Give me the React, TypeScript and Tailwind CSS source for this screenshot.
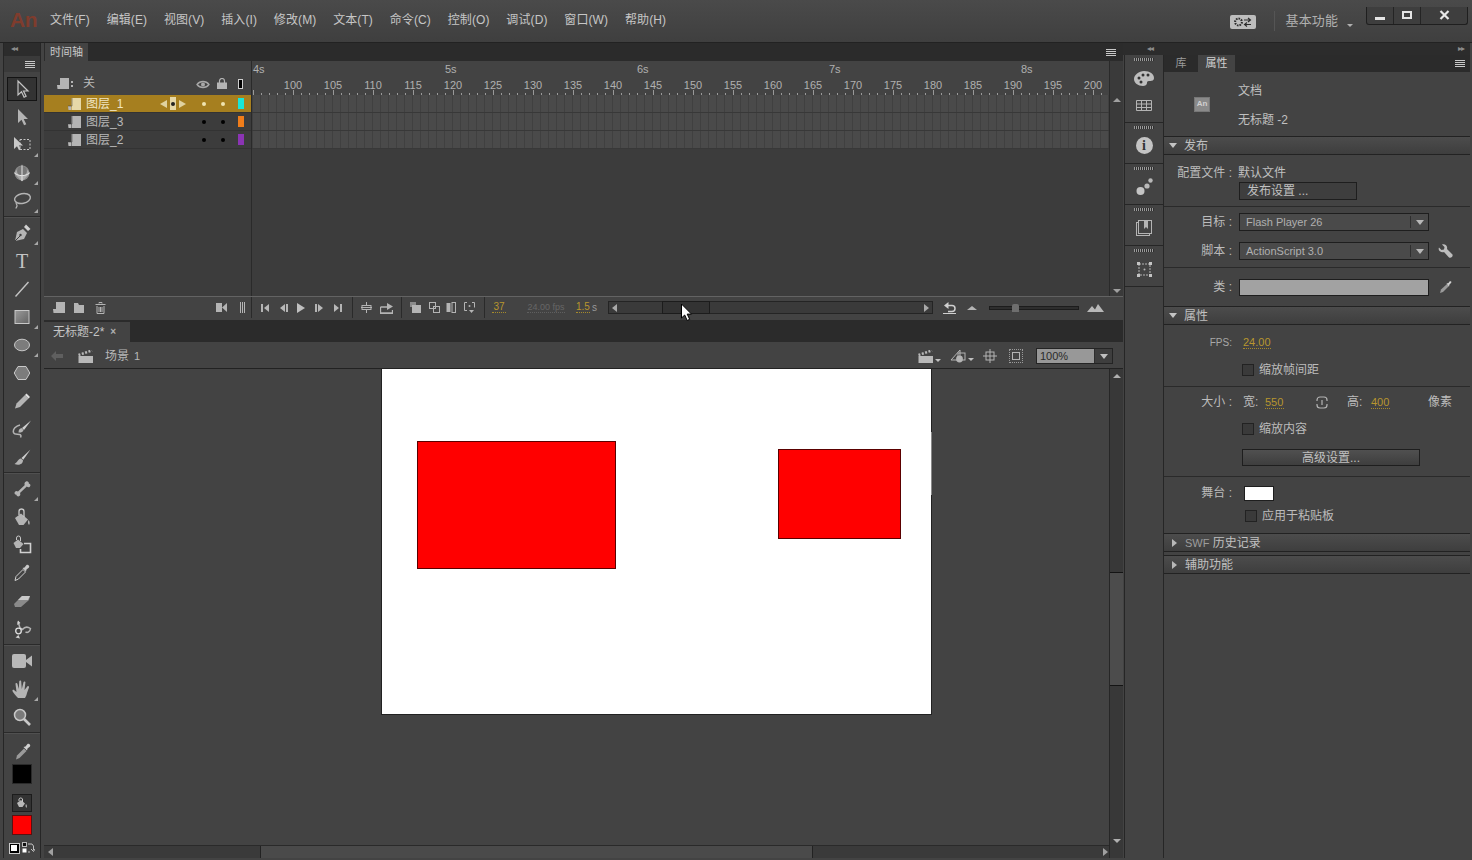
import React from "react";

// Adobe Animate: main window in the dark theme

const G = "#b4b4b4";

function Svg({ s = 20, w, h, children, className }: { s?: number; w?: number; h?: number; children: React.ReactNode; className?: string }) {
  const vw = w ?? s;
  const vh = h ?? s;
  return (
    <svg width={vw} height={vh} viewBox={`0 0 ${vw} ${vh}`} className={className} fill="none">
      {children}
    </svg>
  );
}

// Tool icons, drawn on a 20 x 20 box
const toolIcons: Record<string, React.ReactNode> = {
  select: <path d="M6 2v14l3.500-3.200 2.600 5.400 2-1-2.600-5.200H16z" stroke="#c4c4c4" strokeWidth="1.200" fill="#3a3a3a" />,
  sub: <path d="M6 2v14l3.500-3.200 2.600 5.400 2.200-1-2.600-5.200H16z" fill={G} />,
  free: (
    <>
      <rect x="8" y="4.500" width="10" height="10" stroke="#c4c4c4" strokeDasharray="2 1.500" />
      <path d="M2 2v12l3-2.800 2 4 1.800-.9-2-3.800H11z" fill="#c8c8c8" />
    </>
  ),
  d3: (
    <>
      <circle cx="10" cy="10" r="7.500" fill="#8a8a8a" />
      <path d="M10 1.500l8 8.500-8 8.500L2 10z" fill="#c8c8c8" opacity=".55" />
      <circle cx="10" cy="8" r="5" fill="#777777" />
      <path d="M2.500 10c4 3.500 11 3.500 15 0M10 3v15" stroke="#e4e4e4" strokeWidth="1" />
    </>
  ),
  lasso: (
    <>
      <ellipse cx="10.500" cy="7.500" rx="8" ry="4.800" stroke={G} strokeWidth="1.400" transform="rotate(-12 10.500 7.500)" />
      <path d="M4.500 11c-1.500 2 1 2.500.5 4-.3 1-1 1.600-1 2.500" stroke={G} strokeWidth="1.300" />
    </>
  ),
  pen: (
    <>
      <path d="M3 18l2-9 6-3 4 4-3 6z" fill={G} />
      <path d="M12 4l2-2.500 4.500 4.500-2.500 2z" fill="#d0d0d0" />
      <path d="M3 18l5-5" stroke="#404040" />
      <circle cx="8.500" cy="12" r="1.200" fill="#404040" />
    </>
  ),
  line: <path d="M3.500 17.500L16.500 3" stroke="#c4c4c4" strokeWidth="1.400" />,
  rect: (
    <>
      <defs>
        <linearGradient id="rg" x1="0" y1="0" x2="1" y2="1">
          <stop offset="0" stopColor="#9a9a9a" />
          <stop offset="1" stopColor="#636363" />
        </linearGradient>
      </defs>
      <rect x="3" y="3.500" width="14" height="13" fill="url(#rg)" stroke="#c8c8c8" />
    </>
  ),
  oval: <ellipse cx="10" cy="10" rx="7.500" ry="5.800" fill="#7c7c7c" stroke="#c8c8c8" />,
  hex: <path d="M6 3.500h8l3.800 6.500-3.800 6.500H6L2.200 10z" fill="#7c7c7c" stroke="#c8c8c8" />,
  pencil: (
    <>
      <path d="M3 17.500l1.500-5L13 4l3.500 3.500-8.500 8.500z" fill={G} />
      <path d="M13 4l1.500-1.500 3.500 3.500L16.500 7.500z" fill="#e0e0e0" />
    </>
  ),
  brushwave: (
    <>
      <path d="M19 1.500l-9 7.500 2 2z" fill="#d0d0d0" />
      <path d="M9.500 9c-2.500.5-3 2.500-3 4.500 2.500.2 4.500-.5 5-2.500z" fill={G} />
      <path d="M8 6C4 7 .5 10 1.500 13.500c1 2.500 3.500 1.500 6 2 1.500.3 1.800 1.300 1 3" stroke={G} strokeWidth="1.500" />
    </>
  ),
  brush: (
    <>
      <path d="M18.500 2.500L9.500 11l1.800 1.800z" fill="#d0d0d0" />
      <path d="M9 11.500c-3 .3-3.500 4-6.500 5.500 4 1.500 8.500.5 8.500-3.800z" fill={G} />
    </>
  ),
  bone: <path d="M14 2.500c1.800-.6 3 .5 2.800 2 1.600.2 2.300 2 1 3.200-1 .9-2.300.5-3-.2L8 14c.5 1 .5 2-.3 2.800-1.300 1.200-3 .5-3.300-1-1.600 0-2.600-1.800-1.400-3.100.9-.9 2.100-.8 3-.1L12.800 6c-.6-1-.5-2.800 1.200-3.500z" fill={G} />,
  ink: (
    <>
      <path d="M3 11l6-4.500 7 6-4.500 5.500H7z" fill={G} />
      <path d="M7 8V4.500a2.500 2.500 0 0 1 5 0V10" stroke="#c8c8c8" strokeWidth="1.300" />
      <path d="M16.500 13c1.500 1.500 1.500 4 .5 5-1-1-1.500-3-.5-5z" fill={G} />
    </>
  ),
  bucket: (
    <>
      <path d="M1.500 8l4.500-3.500 5.500 4.500-3.500 4H4z" fill={G} />
      <path d="M4.500 5V3a2 2 0 0 1 4 0v3" stroke="#c8c8c8" />
      <path d="M12 8.500h6.500v9H8.500V14" stroke="#d0d0d0" strokeWidth="1.600" />
    </>
  ),
  dropper: (
    <>
      <path d="M3 17.500l1-4L11 6.500l2.500 2.500-7 7z" stroke="#d0d0d0" />
      <path d="M10.500 5l2-.5 2-2.500c1.500-1 3.500 1 2.500 2.500l-2.500 2-.5 2z" fill="#c8c8c8" />
    </>
  ),
  eraser: (
    <>
      <path d="M2 13l8-8h8l-1 4-8 7H3z" fill="#8a8a8a" />
      <path d="M10 5h8l-2 4H6z" fill="#c8c8c8" />
    </>
  ),
  width: (
    <>
      <path d="M6 2.500l2 6.500 2.500 1.500c2-2.500 5-3 8-1-.5 3.500-3 4.500-5 3.500" stroke={G} strokeWidth="1.500" />
      <path d="M6 1.500l2.500 2.500L5 6zM3.500 18.500l3-2.500L8 19.500z" fill="#d0d0d0" />
      <circle cx="6.500" cy="12" r="2.800" stroke="#e0e0e0" strokeWidth="1.300" />
    </>
  ),
  camera: (
    <>
      <rect x="0" y="3" width="14" height="14" rx="2" fill="#b8b8b8" />
      <path d="M14 9l6-4.500v11L14 11z" fill="#b8b8b8" />
    </>
  ),
  hand: <path d="M6 19c-1.500-1.500-5-5.500-5.500-7-.3-1.200 1-1.700 1.800-.8L4.500 13 3.500 5c-.1-1.300 1.600-1.500 1.900-.2L6.800 10 7.200 2.500c.1-1.300 2-1.300 2 0L9.800 10 11.500 3.300c.3-1.200 2-1 1.900.3L12.500 11l2.800-3.500c.8-1 2.300 0 1.600 1.200L15 14c-.5 2-1 3.500-2 5z" fill={G} />,
  zoom: (
    <>
      <circle cx="8" cy="8" r="5.500" fill="#7a7a7a" stroke="#c8c8c8" strokeWidth="1.500" />
      <path d="M12 12l6 6" stroke="#c8c8c8" strokeWidth="2.600" />
    </>
  ),
  dropperSm: (
    <>
      <path d="M3 17.500l1-4L11 6.500l2.500 2.500-7 7z" fill="#9a9a9a" />
      <path d="M10.500 5l2-.5 2-2.500c1.500-1 3.500 1 2.500 2.500l-2.500 2-.5 2z" fill="#d0d0d0" />
    </>
  ),
};

function Tool({ name, corner, active }: { name?: string; corner?: boolean; active?: boolean }) {
  return (
    <div className="relative mx-auto flex h-[28px] w-[32px] items-center justify-center">
      {active && <div className="absolute inset-x-[1px] inset-y-[2px] border border-[#141414] bg-[#333333]" />}
      {name ? (
        <Svg s={20} className="relative">
          {toolIcons[name]}
        </Svg>
      ) : (
        <span className="relative font-['Liberation_Serif',serif] text-[20px] leading-none text-[#c4c4c4]">T</span>
      )}
      {corner && <div className="absolute bottom-[2px] right-[0px] h-0 w-0 border-b-[4px] border-l-[4px] border-b-[#a8a8a8] border-l-transparent" />}
    </div>
  );
}

function Sep() {
  return <div className="my-[1px] h-[2px] border-b border-t border-b-[#505050] border-t-[#2a2a2a]" />;
}

function MenuLines() {
  return (
    <div className="flex w-[10px] flex-col gap-[1px]">
      <div className="h-[1px] bg-[#c8c8c8]" />
      <div className="h-[1px] bg-[#c8c8c8]" />
      <div className="h-[1px] bg-[#c8c8c8]" />
      <div className="h-[1px] bg-[#c8c8c8]" />
    </div>
  );
}

function TitleBar() {
  const menus = ["文件(F)", "编辑(E)", "视图(V)", "插入(I)", "修改(M)", "文本(T)", "命令(C)", "控制(O)", "调试(D)", "窗口(W)", "帮助(H)"];
  return (
    <div className="relative flex h-[42px] shrink-0 items-center bg-gradient-to-b from-[#4a4a4a] to-[#3f3f3f] text-[12px] tracking-[0.1px] text-[#c6c6c6]">
      <div className="ml-[10px] w-[40px] pb-[3px] font-['Liberation_Sans',sans-serif] text-[21px] font-bold leading-none tracking-[-0.5px] text-[#7f3c2d]">An</div>
      <div className="flex gap-[16.8px] pb-[3px]">
        {menus.map((m) => (
          <span key={m}>{m}</span>
        ))}
      </div>
      <div className="ml-auto flex items-center self-start">
        <div className="mt-[13px] flex h-[14px] w-[26px] items-center justify-center rounded-[2px] bg-[#bdbdbd]">
          <Svg w={20} h={10}>
            <circle cx="5.500" cy="5" r="3.400" stroke="#2c2c2c" strokeWidth="2" strokeDasharray="1.600 1" />
            <path d="M11 3h6M15 1l2.500 2-2.500 2M18 7.500h-6M14 5.500l-2.500 2 2.500 2" stroke="#2c2c2c" strokeWidth="1.100" />
          </Svg>
        </div>
        <div className="ml-[18px] mt-[11px] h-[20px] w-[1px] bg-[#555555]" />
        <span className="ml-[11px] mt-[10px] text-[13px] text-[#b0b0b0]">基本功能</span>
        <div className="ml-[9px] mt-[19px] h-0 w-0 border-l-[3px] border-r-[3px] border-t-[3px] border-l-transparent border-r-transparent border-t-[#b0b0b0]" />
        <div className="ml-[13px] flex h-[18px] overflow-hidden rounded-b-[3px] border border-t-0 border-[#1f1f1f] bg-[#3e3e3e]">
          <div className="flex w-[27px] items-end justify-center border-r border-[#242424] pb-[4px]">
            <div className="h-[3px] w-[10px] bg-[#e4e4e4]" />
          </div>
          <div className="flex w-[27px] items-center justify-center border-r border-[#242424]">
            <div className="h-[8px] w-[10px] border-2 border-[#e4e4e4]" />
          </div>
          <div className="flex w-[46px] items-center justify-center">
            <Svg w={11} h={10}>
              <path d="M1.500 1l8 8M9.500 1l-8 8" stroke="#e8e8e8" strokeWidth="2.200" />
            </Svg>
          </div>
        </div>
        <div className="w-[4px]" />
      </div>
    </div>
  );
}

function ToolBar() {
  return (
    <div className="ml-[3px] flex w-[38px] shrink-0 flex-col border-x border-[#262626]">
      <div className="flex h-[13px] items-center bg-[#2c2c2c] pl-[7px] text-[8px] leading-none tracking-[-1px] text-[#8c8c8c]">
        <span className="pb-[2px]">◂◂</span>
      </div>
      <div className="flex h-[16px] items-center justify-end bg-[#3a3a3a] pr-[5px]">
        <MenuLines />
      </div>
      <div className="mt-[3px] flex flex-col">
        <Tool name="select" active />
        <Tool name="sub" />
        <Tool name="free" corner />
        <Tool name="d3" corner />
        <Tool name="lasso" corner />
        <div className="h-[4px]"><Sep /></div>
        <Tool name="pen" corner />
        <Tool />
        <Tool name="line" />
        <Tool name="rect" corner />
        <Tool name="oval" corner />
        <Tool name="hex" />
        <Tool name="pencil" />
        <Tool name="brushwave" />
        <Tool name="brush" />
        <div className="h-[4px]"><Sep /></div>
        <Tool name="bone" corner />
        <Tool name="ink" />
        <Tool name="bucket" />
        <Tool name="dropper" />
        <Tool name="eraser" />
        <Tool name="width" />
        <div className="h-[4px]"><Sep /></div>
        <Tool name="camera" />
        <Tool name="hand" corner />
        <Tool name="zoom" />
        <div className="h-[6px]"><Sep /></div>
        <div className="flex h-[27px] items-center justify-center">
          <Svg s={18}>{toolIcons.dropperSm}</Svg>
        </div>
        <div className="mx-auto h-[20px] w-[20px] border border-[#2a2a2a] bg-black" />
        <div className="mx-auto mt-[10px] flex h-[18px] w-[20px] items-center justify-center border border-[#1c1c1c] bg-[#333333]">
          <Svg s={14}>
            <path d="M2 7l4-3 4 3.500-2.500 3.500H4z" fill="#b8b8b8" />
            <path d="M4 5V3a2 2 0 0 1 3.500 0v3" stroke="#c8c8c8" />
            <path d="M11 8c1 1 1.200 3 .3 4-.8-1-1-2.800-.3-4z" fill="#b8b8b8" />
          </Svg>
        </div>
        <div className="mx-auto mt-[3px] h-[20px] w-[20px] border border-[#5a1010] bg-[#ff0000]" />
        <div className="mt-[7px] flex items-center justify-center gap-[2px]">
          <div className="relative h-[11px] w-[11px] border border-[#cccccc] bg-black">
            <div className="absolute left-[1px] top-[1px] h-[6px] w-[6px] bg-white" />
          </div>
          <Svg w={13} h={12}>
            <rect x=".5" y=".5" width="4" height="4" fill="#111111" stroke="#bbbbbb" />
            <rect x=".5" y="6.500" width="4" height="4" fill="#ffffff" />
            <path d="M6 2h4l1.500 2v4M9 7l2.500 2.500L13 7M8 10H6" stroke="#c0c0c0" />
          </Svg>
        </div>
      </div>
    </div>
  );
}

function Gl({ w, children, className = "" }: { w: number; children?: React.ReactNode; className?: string }) {
  return (
    <div className={`flex shrink-0 items-center justify-center ${className}`} style={{ width: w }}>
      {children}
    </div>
  );
}

function LayerIcon({ light }: { light?: boolean }) {
  return (
    <Svg w={13} h={12}>
      <path d="M3.500 0H13v12H3.500z" fill={light ? "#e6d8a8" : "#b4b4b4"} />
      <path d="M0 8h3v4H.5z" fill="#b8b8b8" />
      <path d="M0 8h4V0" stroke="#333333" strokeWidth=".8" opacity=".6" />
    </Svg>
  );
}

function Dot({ light }: { light?: boolean }) {
  return <div className={`h-[4px] w-[4px] rounded-full ${light ? "bg-[#f0e4b0]" : "bg-black"}`} />;
}

function LayerRow({ name, color, active }: { name: string; color: string; active?: boolean }) {
  return (
    <div className={`flex h-[18px] items-center border-b border-[#333333] ${active ? "bg-[#a67f1f] text-[#f0e6c4]" : "text-[#b8b8b8]"}`}>
      <div className="ml-[24px]">
        <LayerIcon light={active} />
      </div>
      <span className="ml-[5px] w-[66px] text-[12px] leading-none">{name}</span>
      {active ? (
        <div className="flex w-[42px] items-center justify-center gap-[3px]">
          <div className="h-0 w-0 border-y-[4px] border-r-[7px] border-y-transparent border-r-[#e0d2a0]" />
          <div className="flex h-[13px] w-[6px] items-center justify-center bg-[#e6d8a8]">
            <div className="h-[4px] w-[4px] rounded-full bg-[#222222]" />
          </div>
          <div className="h-0 w-0 border-y-[4px] border-l-[7px] border-y-transparent border-l-[#e0d2a0]" />
        </div>
      ) : (
        <div className="w-[42px]" />
      )}
      <Gl w={19}>
        <Dot light={active} />
      </Gl>
      <Gl w={19}>
        <Dot light={active} />
      </Gl>
      <Gl w={18}>
        <div className="h-[11px] w-[6px]" style={{ backgroundColor: color }} />
      </Gl>
    </div>
  );
}

function Ruler() {
  const secs = ["4s", "5s", "6s", "7s", "8s"];
  const nums = Array.from({ length: 21 }, (_, i) => 100 + i * 5);
  return (
    <div className="relative h-[34px] flex-1 overflow-hidden text-[11px] leading-none text-[#b0b0b0]">
      <div className="flex pl-[1px] pt-[3px]">
        {secs.map((s) => (
          <span key={s} className="w-[192px] shrink-0">
            {s}
          </span>
        ))}
      </div>
      <div className="mt-[5px] flex pl-[21px]">
        {nums.map((n) => (
          <span key={n} className="w-[40px] shrink-0 text-center">
            {n}
          </span>
        ))}
      </div>
      <div className="absolute bottom-0 left-[1px] right-0 h-[2px] bg-[repeating-linear-gradient(90deg,#9a9a9a_0,#9a9a9a_1px,transparent_1px,transparent_8px)]" />
      <div className="absolute bottom-0 left-[1px] right-0 h-[5px] bg-[repeating-linear-gradient(90deg,#9a9a9a_0,#9a9a9a_1px,transparent_1px,transparent_40px)]" />
    </div>
  );
}

function FrameRow() {
  return <div className="h-[18px] border-b border-[#383838] bg-[#4a4a4a] bg-[repeating-linear-gradient(90deg,#404040_0,#404040_1px,transparent_1px,transparent_8px)]" />;
}

function Timeline() {
  return (
    <div className="flex h-[279px] shrink-0 flex-col border-b-2 border-[#2b2b2b] bg-[#3c3c3c]">
      <div className="flex h-[18px] shrink-0 items-stretch bg-[#2b2b2b] pl-[1px]">
        <div className="flex w-[43px] items-center justify-center bg-[#434343] text-[11px] text-[#c8c8c8]">时间轴</div>
        <div className="ml-auto flex items-center pr-[7px]">
          <MenuLines />
        </div>
      </div>
      <div className="flex min-h-0 flex-1">
        <div className="flex min-w-0 flex-1 flex-col">
          <div className="flex min-h-0 flex-1">
            <div className="flex w-[208px] shrink-0 flex-col border-r border-[#2a2a2a]">
              <div className="flex h-[34px] items-end bg-[#434343] pb-[6px]">
                <div className="ml-[13px] flex items-center gap-[2px]">
                  <Svg w={12} h={11}>
                    <path d="M3 0h9v11H3z" fill="#b4b4b4" />
                    <path d="M0 7h3v4H.5z" fill="#b8b8b8" />
                  </Svg>
                  <div className="flex flex-col gap-[2px]">
                    <div className="h-[2px] w-[2px] bg-[#b4b4b4]" />
                    <div className="h-[2px] w-[2px] bg-[#b4b4b4]" />
                  </div>
                </div>
                <span className="ml-[10px] w-[110px] text-[12px] leading-none text-[#b8b8b8]">关</span>
                <Gl w={19}>
                  <Svg w={14} h={9}>
                    <path d="M1 4.500C4 .5 10 .5 13 4.500 10 8.500 4 8.500 1 4.500z" stroke="#a8a8a8" strokeWidth="1.300" />
                    <circle cx="7" cy="4.500" r="2" fill="#a8a8a8" />
                  </Svg>
                </Gl>
                <Gl w={19}>
                  <Svg w={10} h={11}>
                    <rect y="4.500" width="10" height="6.500" fill="#b4b4b4" />
                    <path d="M2.500 5V3a2.500 2.500 0 0 1 5 0v2" stroke="#b4b4b4" strokeWidth="1.200" />
                  </Svg>
                </Gl>
                <Gl w={18}>
                  <div className="h-[10px] w-[5px] border border-[#cfcfcf] bg-black" />
                </Gl>
              </div>
              <LayerRow name="图层_1" color="#19e6d8" active />
              <LayerRow name="图层_3" color="#f07d1a" />
              <LayerRow name="图层_2" color="#8b34b4" />
            </div>
            <div className="flex min-w-0 flex-1 flex-col overflow-hidden">
              <div className="flex bg-[#434343]">
                <Ruler />
              </div>
              <FrameRow />
              <FrameRow />
              <FrameRow />
            </div>
          </div>
        </div>
        <div className="flex w-[14px] shrink-0 flex-col items-center justify-between border-l border-[#2a2a2a] bg-[#3a3a3a] py-[37px] pb-[3px]">
          <div className="h-0 w-0 border-x-[4px] border-b-[4px] border-x-transparent border-b-[#a0a0a0]" />
          <div className="h-0 w-0 border-x-[4px] border-t-[4px] border-x-transparent border-t-[#a0a0a0]" />
        </div>
      </div>
      <TimelineFooter />
    </div>
  );
}

function Tri({ dir = "r", c = "#b8b8b8" }: { dir?: "r" | "l"; c?: string }) {
  return dir === "r" ? (
    <div className="h-0 w-0 border-y-[4px] border-l-[5px] border-y-transparent" style={{ borderLeftColor: c }} />
  ) : (
    <div className="h-0 w-0 border-y-[4px] border-r-[5px] border-y-transparent" style={{ borderRightColor: c }} />
  );
}

function VLine() {
  return <div className="h-full w-[1px] shrink-0 bg-[#2a2a2a]" />;
}

function TimelineFooter() {
  const ic = "#b4b4b4";
  return (
    <div className="flex h-[24px] shrink-0 items-center border-t border-[#636363] bg-[#434343] pb-[2px] pl-[5px] text-[10px] leading-none">
      <Gl w={20}>
        <Svg w={12} h={11}>
          <path d="M3 0h9v11H3z" fill={ic} />
          <path d="M0 7h3v4H.5z" fill={ic} />
        </Svg>
      </Gl>
      <Gl w={20}>
        <Svg w={12} h={11}>
          <path d="M1 1h4l1 2h5v8H1z" fill={ic} />
        </Svg>
      </Gl>
      <Gl w={22}>
        <Svg w={11} h={12}>
          <path d="M4 1.500V.5h3v1M.5 2.500h10M2 4v7.500h7V4M4 5v5M5.500 5v5M7 5v5" stroke={ic} />
        </Svg>
      </Gl>
      <div className="w-[98px]" />
      <Gl w={24}>
        <Svg w={11} h={9}>
          <rect width="6" height="9" fill={ic} />
          <path d="M6 4.500L11 0v9z" fill={ic} />
        </Svg>
      </Gl>
      <Gl w={18}>
        <Svg w={5} h={11}>
          <path d="M.5 0v11M2.500 0v11M4.500 0v11" stroke={ic} />
        </Svg>
      </Gl>
      <VLine />
      <Gl w={26} className="gap-[1px]">
        <div className="h-[8px] w-[2px] bg-[#b4b4b4]" />
        <Tri dir="l" />
      </Gl>
      <Gl w={12} className="gap-[1px]">
        <Tri dir="l" />
        <div className="h-[8px] w-[2px] bg-[#b4b4b4]" />
      </Gl>
      <Gl w={22}>
        <div className="h-0 w-0 border-y-[5px] border-l-[8px] border-y-transparent border-l-[#c0c0c0]" />
      </Gl>
      <Gl w={14} className="gap-[1px]">
        <div className="h-[8px] w-[2px] bg-[#b4b4b4]" />
        <Tri />
      </Gl>
      <Gl w={24} className="gap-[1px]">
        <Tri />
        <div className="h-[8px] w-[2px] bg-[#b4b4b4]" />
      </Gl>
      <div className="ml-[2px] h-full"><VLine /></div>
      <Gl w={26}>
        <Svg w={11} h={11}>
          <path d="M5.500 0v3M5.500 8v3M0 5.500h11" stroke={ic} />
          <rect x="1" y="3.500" width="9" height="4" stroke={ic} />
        </Svg>
      </Gl>
      <Gl w={14}>
        <Svg w={13} h={12}>
          <path d="M.5 5h8M.5 5v6h12V8M0 11.500h13" stroke={ic} strokeWidth="1.300" />
          <path d="M7 1l6 3.500L7 8z" fill={ic} />
        </Svg>
      </Gl>
      <div className="ml-[8px] h-full"><VLine /></div>
      <Gl w={26}>
        <Svg w={11} h={11}>
          <rect x="2" y="3" width="9" height="8" fill={ic} />
          <path d="M0 0h6v3H2v2H0z" fill="#8a8a8a" />
        </Svg>
      </Gl>
      <Gl w={12}>
        <Svg w={11} h={11}>
          <rect x=".5" y=".5" width="6" height="6" stroke={ic} />
          <rect x="4.500" y="4.500" width="6" height="6" stroke={ic} />
        </Svg>
      </Gl>
      <Gl w={22}>
        <Svg w={10} h={11}>
          <rect x=".5" y="1" width="4" height="9" fill={ic} />
          <rect x="6" y=".5" width="3.500" height="10" stroke={ic} />
        </Svg>
      </Gl>
      <Gl w={14}>
        <Svg w={11} h={11}>
          <path d="M3 .5H.5v8H3M8 .5h2.500v5" stroke={ic} />
          <circle cx="5.500" cy="4" r="1" fill={ic} />
          <path d="M5 8h5l-2.500 3z" fill={ic} />
        </Svg>
      </Gl>
      <div className="ml-[8px] h-full"><VLine /></div>
      <span className="ml-[7px] w-[14px] border-b border-dotted border-[#a68a2a] text-center text-[#b8962e]">37</span>
      <span className="ml-[21px] w-[38px] whitespace-nowrap border-b border-dotted border-[#5f5f5f] text-center text-[9px] text-[#666666]">24.00 fps</span>
      <span className="ml-[11px] border-b border-dotted border-[#a68a2a] text-[#b8962e]">1.5</span>
      <span className="ml-[2px] text-[#999999]">s</span>
      <div className="relative ml-[11px] flex h-[13px] w-[325px] shrink-0 items-center justify-between border border-[#242424] bg-[#3a3a3a] px-[3px]">
        <Tri dir="l" c="#a8a8a8" />
        <Tri c="#a8a8a8" />
        <div className="absolute -top-[1px] left-[53px] h-[13px] w-[48px] border border-[#1c1c1c] bg-[#333333]" />
        {/* mouse pointer over the scroll thumb */}
        <Svg w={13} h={19} className="absolute left-[71px] top-[1px]">
          <path d="M1.500 1v14l3.200-3 2.500 5.500 2.500-1.200-2.500-5.200h4.300z" fill="#ffffff" stroke="#000000" />
        </Svg>
      </div>
      <Gl w={34}>
        <Svg w={13} h={13}>
          <path d="M3 4.500h6a3 3 0 0 1 0 6H5" stroke="#cfcfcf" strokeWidth="1.500" />
          <path d="M5.500 1v7L1 4.500z" fill="#cfcfcf" />
          <path d="M0 12.500h13" stroke="#cfcfcf" />
        </Svg>
      </Gl>
      <Gl w={10}>
        <div className="h-0 w-0 border-x-[5px] border-b-[4px] border-x-transparent border-b-[#b4b4b4]" />
      </Gl>
      <div className="relative ml-[12px] h-[4px] w-[90px] border border-[#1c1c1c] bg-[#2e2e2e]">
        <div className="absolute -top-[3px] left-[22px] h-[8px] w-[7px] rounded-t-[2px] bg-[#6e6e6e]" />
      </div>
      <Gl w={34}>
        <Svg w={17} h={8}>
          <path d="M0 8l5-6 3 3.500L11 0l6 8z" fill="#b8b8b8" />
        </Svg>
      </Gl>
    </div>
  );
}

function Clapper({ c = "#b8b8b8" }: { c?: string }) {
  return (
    <Svg w={16} h={13}>
      <path d="M.5 6h14.500v7H.5z" fill={c} />
      <path d="M.5 5L14 .5" stroke={c} strokeWidth="2.500" strokeDasharray="2 1.500" />
    </Svg>
  );
}

function DocArea() {
  const mini = <div className="ml-[1px] mt-[9px] h-0 w-0 border-x-[3px] border-t-[3px] border-x-transparent border-t-[#c0c0c0]" />;
  return (
    <div className="flex min-h-0 flex-1 flex-col">
      <div className="flex h-[20px] shrink-0 items-stretch bg-[#2b2b2b]">
        <div className="flex w-[86px] items-center bg-[#434343] pl-[9px] text-[12px] text-[#c4c4c4]">
          <span>无标题-2*</span>
          <span className="ml-[6px] text-[10px] font-bold leading-none text-[#b0b0b0]">×</span>
        </div>
      </div>
      <div className="flex h-[27px] shrink-0 items-center border-b border-[#222222] bg-[#434343] pt-[2px] text-[12px] text-[#b8b8b8]">
        <div className="ml-[7px]">
          <Svg w={12} h={10}>
            <path d="M0 5l5-5v3h7v4H5v3z" fill="#5f5f5f" />
          </Svg>
        </div>
        <div className="ml-[15px]">
          <Clapper />
        </div>
        <span className="ml-[11px]">场景</span>
        <span className="ml-[5px] text-[11px]">1</span>
        <div className="ml-auto flex items-center">
          <Clapper />
          {mini}
          <div className="ml-[9px] flex">
            <Svg w={17} h={14}>
              <path d="M1 11L10 1v10z" stroke="#b4b4b4" />
              <rect x="8" y="4" width="7" height="7" stroke="#b4b4b4" />
              <circle cx="9.500" cy="10" r="3.400" fill="#b4b4b4" />
            </Svg>
            {mini}
          </div>
          <div className="ml-[9px]">
            <Svg s={14}>
              <rect x="3" y="3" width="8" height="8" stroke="#b4b4b4" />
              <path d="M7 0v14M0 7h14" stroke="#b4b4b4" />
            </Svg>
          </div>
          <div className="ml-[12px] flex h-[14px] w-[14px] items-center justify-center border border-dotted border-[#9a9a9a]">
            <div className="h-[8px] w-[8px] border border-[#b4b4b4]" />
          </div>
          <div className="ml-[13px] flex h-[16px] w-[77px] border border-[#242424]">
            <div className="flex flex-1 items-center bg-[#989898] pl-[3px] text-[11px] leading-none text-[#2a2a2a]">100%</div>
            <div className="flex w-[18px] items-center justify-center border-l border-[#2e2e2e] bg-[#3e3e3e]">
              <div className="h-0 w-0 border-x-[4px] border-t-[5px] border-x-transparent border-t-[#c0c0c0]" />
            </div>
          </div>
          <div className="w-[10px]" />
        </div>
      </div>
      <div className="flex min-h-0 flex-1">
        <div className="flex min-w-0 flex-1 flex-col">
          <div className="relative min-h-0 flex-1 overflow-hidden bg-[#434343]">
            {/* the stage is a free canvas: its shapes sit at their own coordinates */}
            <div className="absolute -top-[31px] left-[337px] h-[377px] w-[551px] border border-[#222222] bg-white" />
            <div className="absolute left-[887px] top-[63px] h-[63px] w-[1px] bg-[#8a8a8a]" />
            <div className="absolute left-[373px] top-[72px] h-[128px] w-[199px] border border-[#5a0000] bg-[#ff0000]" />
            <div className="absolute left-[734px] top-[80px] h-[90px] w-[123px] border border-[#5a0000] bg-[#ff0000]" />
          </div>
          <div className="flex h-[13px] shrink-0 items-center border-t border-[#2a2a2a] bg-[#3a3a3a]">
            <div className="ml-[4px]"><Tri dir="l" c="#a0a0a0" /></div>
            <div className="ml-[207px] h-full w-[553px] border-x border-[#222222] bg-[#4a4a4a]" />
            <div className="ml-auto mr-[1px]"><Tri c="#a0a0a0" /></div>
          </div>
        </div>
        <div className="flex w-[14px] shrink-0 flex-col border-l border-[#262626] bg-[#383838]">
          <div className="flex h-[14px] items-center justify-center">
            <div className="h-0 w-0 border-x-[4px] border-b-[4px] border-x-transparent border-b-[#b0b0b0]" />
          </div>
          <div className="mt-[189px] h-[114px] border-y border-[#141414] bg-[#4c4c4c]" />
          <div className="mt-auto flex h-[26px] items-start justify-center pt-[7px]">
            <div className="h-0 w-0 border-x-[4px] border-t-[4px] border-x-transparent border-t-[#b0b0b0]" />
          </div>
        </div>
      </div>
    </div>
  );
}

function DockGroup({ h, children }: { h: number; children: React.ReactNode }) {
  return (
    <div className="flex shrink-0 flex-col items-center border-b border-[#262626] pt-[3px]" style={{ height: h }}>
      <div className="h-[3px] w-[20px] shrink-0 bg-[repeating-linear-gradient(90deg,#9a9a9a_0,#9a9a9a_1px,#2e2e2e_1px,#2e2e2e_2px)]" />
      {children}
    </div>
  );
}

function Dock() {
  return (
    <div className="ml-[1px] flex w-[40px] shrink-0 flex-col border-x border-[#262626] bg-[#434343]">
      <DockGroup h={68}>
        <div className="mt-[7px] flex h-[20px] items-center">
          <Svg w={20} h={15}>
            <path d="M10 0c6 0 10 3 10 7 0 3-3 3-5 3-2 0-2 1-2 2 0 2-2 3-4 3-5 0-9-3-9-7s5-8 10-8z" fill="#bdbdbd" />
            <circle cx="5" cy="7" r="1.500" fill="#333333" />
            <circle cx="9" cy="4" r="1.500" fill="#333333" />
            <circle cx="14" cy="4" r="1.500" fill="#333333" />
            <circle cx="7" cy="11" r="1.500" fill="#333333" />
          </Svg>
        </div>
        <div className="mt-[12px] flex h-[11px] items-center">
          <Svg w={16} h={11}>
            <path d="M.5.5h15v10H.5zM.5 4h15M.5 7.500h15M5.500.5v10M10.500.5v10" stroke="#b4b4b4" />
          </Svg>
        </div>
      </DockGroup>
      <DockGroup h={41}>
        <div className="mt-[8px] flex h-[17px] w-[17px] items-center justify-center rounded-full bg-[#c4c4c4] font-['Liberation_Serif',serif] text-[14px] font-bold leading-none text-[#333333]">i</div>
      </DockGroup>
      <DockGroup h={41}>
        <div className="mt-[8px]">
          <Svg w={17} h={18}>
            <circle cx="4.500" cy="13" r="4" fill="#c4c4c4" />
            <circle cx="11" cy="8" r="2.600" fill="#b8b8b8" />
            <circle cx="14.500" cy="2.500" r="2.200" fill="#b8b8b8" />
          </Svg>
        </div>
      </DockGroup>
      <DockGroup h={41}>
        <div className="mt-[9px]">
          <Svg w={16} h={16}>
            <rect x=".5" y="2.500" width="13" height="13" stroke="#b4b4b4" />
            <rect x="2.500" y=".5" width="13" height="13" fill="#434343" stroke="#b4b4b4" />
            <path d="M8 1v8l2-2 2 2V1z" fill="#b4b4b4" />
          </Svg>
        </div>
      </DockGroup>
      <DockGroup h={41}>
        <div className="mt-[10px]">
          <Svg s={15}>
            <rect x="2" y="2" width="11" height="11" stroke="#b4b4b4" strokeDasharray="2 1" />
            <path d="M0 0h3v3H0zM12 0h3v3h-3zM0 12h3v3H0zM12 12h3v3h-3z" fill="#c4c4c4" />
            <circle cx="7.500" cy="7.500" r="1" fill="#b4b4b4" />
          </Svg>
        </div>
      </DockGroup>
    </div>
  );
}

function Header({ title, open }: { title: React.ReactNode; open?: boolean }) {
  return (
    <div className="flex h-[19px] shrink-0 items-center border-y border-[#222222] bg-gradient-to-b from-[#4c4c4c] to-[#3e3e3e] text-[12px] text-[#c0c0c0]">
      {open ? (
        <div className="ml-[5px] mr-[7px] h-0 w-0 border-x-[4px] border-t-[5px] border-x-transparent border-t-[#c4c4c4]" />
      ) : (
        <div className="ml-[8px] mr-[8px] h-0 w-0 border-y-[4px] border-l-[5px] border-y-transparent border-l-[#b8b8b8]" />
      )}
      {title}
    </div>
  );
}

function Label({ children }: { children?: React.ReactNode }) {
  return <div className="w-[68px] shrink-0 text-right text-[12px] text-[#bcbcbc]">{children}</div>;
}

function Dropdown({ text }: { text: string }) {
  return (
    <div className="ml-[7px] flex h-[18px] w-[190px] items-center border border-[#1e1e1e] bg-[#4a4a4a]">
      <span className="flex-1 pl-[6px] font-['Liberation_Sans',sans-serif] text-[11px] leading-none text-[#b0b0b0]">{text}</span>
      <div className="flex h-[12px] w-[18px] items-center justify-center border-l border-[#2e2e2e]">
        <div className="h-0 w-0 border-x-[4px] border-t-[5px] border-x-transparent border-t-[#b8b8b8]" />
      </div>
    </div>
  );
}

function Check({ label, ml }: { label: string; ml: number }) {
  return (
    <div className="flex items-center" style={{ marginLeft: ml }}>
      <div className="h-[12px] w-[12px] border border-[#222222] bg-[#3a3a3a]" />
      <span className="ml-[5px] text-[12px] leading-none text-[#bcbcbc]">{label}</span>
    </div>
  );
}

function Num({ children, w }: { children: React.ReactNode; w?: number }) {
  return (
    <span className="border-b border-dotted border-[#a68a2a] font-['Liberation_Sans',sans-serif] text-[11px] leading-[12px] text-[#b8962e]" style={{ width: w }}>
      {children}
    </span>
  );
}

function Props() {
  const divider = "border-b border-[#2a2a2a]";
  return (
    <div className="flex min-w-0 flex-1 flex-col">
      <div className="flex h-[17px] shrink-0 items-stretch bg-[#2b2b2b]">
        <div className="flex w-[34px] items-center justify-center text-[11px] text-[#9a9a9a]">库</div>
        <div className="flex w-[37px] items-center justify-center bg-[#434343] text-[11px] text-[#d0d0d0]">属性</div>
        <div className="ml-auto flex items-center pr-[5px]">
          <MenuLines />
        </div>
      </div>
      <div className="flex h-[64px] shrink-0 items-center">
        <div className="ml-[30px] flex h-[15px] w-[16px] items-center justify-center border border-[#777777] bg-[#8a8a8a] font-['Liberation_Sans',sans-serif] text-[8px] font-bold leading-none text-[#d0d0d0]">An</div>
        <div className="ml-[28px] mt-[4px] flex flex-col gap-[12px] text-[12px] leading-[17px] text-[#c0c0c0]">
          <span>文档</span>
          <span>无标题 -2</span>
        </div>
      </div>
      <Header open title="发布" />
      <div className={`flex h-[52px] shrink-0 flex-col ${divider}`}>
        <div className="mt-[9px] flex h-[18px] items-center">
          <Label>配置文件 :</Label>
          <span className="ml-[6px] text-[12px] text-[#c0c0c0]">默认文件</span>
        </div>
        <div className="ml-[75px] flex h-[18px] w-[118px] items-center border border-[#1e1e1e] bg-[#3e3e3e] pl-[7px] text-[12px] leading-none text-[#c0c0c0]">发布设置 ...</div>
      </div>
      <div className={`flex h-[61px] shrink-0 flex-col gap-[11px] pt-[6px] ${divider}`}>
        <div className="flex items-center">
          <Label>目标 :</Label>
          <Dropdown text="Flash Player 26" />
        </div>
        <div className="flex items-center">
          <Label>脚本 :</Label>
          <Dropdown text="ActionScript 3.0" />
          <div className="ml-[9px]">
            <Svg s={15}>
              <path d="M1 3.500L3.500 6l2.500-.5.500-2.500L4 .5C7-.5 10 2 9 5l5.500 5.500c.8 2-1.500 4-3.500 3L6 8C3 9-.5 6.500 1 3.500z" fill="#bdbdbd" />
            </Svg>
          </div>
        </div>
      </div>
      <div className="flex h-[38px] shrink-0 items-center">
        <Label>类 :</Label>
        <div className="ml-[7px] h-[17px] w-[190px] border border-[#1e1e1e] bg-[#a2a2a2]" />
        <div className="ml-[10px]">
          <Svg s={13}>
            <path d="M1 12l1-3.500L8 3l2 2-6 6z" fill="#9a9a9a" />
            <path d="M7.500 2.500l2-.5 1-1.500c1.500-1 2.500.5 1.500 1.500L10.500 3.500 10 5.500z" fill="#d0d0d0" />
          </Svg>
        </div>
      </div>
      <Header open title="属性" />
      <div className={`flex h-[62px] shrink-0 flex-col ${divider}`}>
        <div className="mt-[9px] flex h-[16px] items-center">
          <div className="w-[68px] text-right font-['Liberation_Sans',sans-serif] text-[10px] text-[#a8a8a8]">FPS:</div>
          <div className="ml-[11px] flex"><Num>24.00</Num></div>
        </div>
        <div className="mt-[14px]">
          <Check label="缩放帧间距" ml={78} />
        </div>
      </div>
      <div className={`flex h-[90px] shrink-0 flex-col ${divider}`}>
        <div className="mt-[6px] flex h-[18px] items-center text-[12px] text-[#bcbcbc]">
          <Label>大小 :</Label>
          <span className="ml-[11px] w-[17px]">宽:</span>
          <div className="ml-[5px] flex"><Num w={19}>550</Num></div>
          <div className="ml-[31px]">
            <Svg w={14} h={13}>
              <path d="M2 5V4a3 3 0 0 1 3-3h4a3 3 0 0 1 3 3v1M2 8v1a3 3 0 0 0 3 3h4a3 3 0 0 0 3-3V8M7 4v5" stroke="#b4b4b4" strokeWidth="1.200" />
            </Svg>
          </div>
          <span className="ml-[18px] w-[17px]">高:</span>
          <div className="ml-[7px] flex"><Num w={19}>400</Num></div>
          <span className="ml-[38px]">像素</span>
        </div>
        <div className="mt-[12px]">
          <Check label="缩放内容" ml={78} />
        </div>
        <div className="ml-[78px] mt-[14px] flex h-[17px] w-[178px] items-center justify-center border border-[#1e1e1e] bg-gradient-to-b from-[#505050] to-[#3e3e3e] text-[12px] leading-none text-[#c0c0c0]">高级设置...</div>
      </div>
      <div className="flex h-[56px] shrink-0 flex-col">
        <div className="mt-[8px] flex h-[16px] items-center">
          <Label>舞台 :</Label>
          <div className="ml-[12px] h-[15px] w-[30px] border border-[#1e1e1e] bg-white" />
        </div>
        <div className="mt-[9px]">
          <Check label="应用于粘贴板" ml={81} />
        </div>
      </div>
      <Header
        title={
          <span>
            <span className="font-['Liberation_Sans',sans-serif] text-[11px] text-[#9c9c9c]">SWF</span> 历史记录
          </span>
        }
      />
      <div className="h-[3px] shrink-0" />
      <Header title="辅助功能" />
    </div>
  );
}

export default function App() {
  return (
    <div className="flex h-[860px] w-[1472px] flex-col overflow-hidden bg-[#434343] font-['Liberation_Sans','Noto_Sans_CJK_SC',sans-serif]">
      <TitleBar />
      <div className="flex min-h-0 flex-1 border-t border-[#222222] pb-[2px] pr-[2px]">
        <ToolBar />
        <div className="ml-[3px] flex w-[1079px] shrink-0 flex-col">
          <Timeline />
          <DocArea />
        </div>
        <div className="flex min-w-0 flex-1 flex-col">
          <div className="flex h-[12px] shrink-0 items-center justify-between bg-[#2c2c2c] pl-[24px] pr-[6px] text-[8px] leading-none tracking-[-1px] text-[#8c8c8c]">
            <span>◂◂</span>
            <span>▸▸</span>
          </div>
          <div className="flex min-h-0 flex-1">
            <Dock />
            <Props />
          </div>
        </div>
      </div>
    </div>
  );
}
